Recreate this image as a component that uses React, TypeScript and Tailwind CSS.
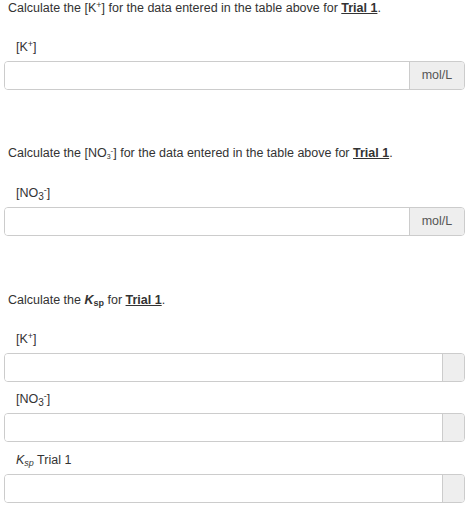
const font = { fontFamily: '"Liberation Sans", Arial, sans-serif' };

const Trial = () => <u className="font-bold">Trial 1</u>;

const Field = ({ label, unit }: { label: React.ReactNode; unit?: string }) => (
  <div>
    <div className="pl-[12px] text-[12.5px] leading-[16px] text-[#333] h-[16px]">{label}</div>
    <div className="mt-[6px] flex h-[29px] rounded-[4px] border border-[#ccc] overflow-hidden shadow-[inset_0_1px_1px_rgba(0,0,0,0.06)]">
      <div className="flex-1 bg-white" />
      <div
        className={
          unit
            ? 'flex w-[55px] items-center justify-center border-l border-[#ccc] bg-[#eee] text-[12.5px] text-[#555]'
            : 'w-[22px] border-l border-[#ccc] bg-[#eee]'
        }
      >
        {unit}
      </div>
    </div>
  </div>
);

const NO3 = () => (
  <span>
    [NO<sub className="text-[10px]">3</sub>
    <sup className="text-[9px]">-</sup>]
  </span>
);

const KPlus = () => (
  <span>
    [K<sup className="text-[9px]">+</sup>]
  </span>
);

export default function App() {
  return (
    <div className="w-[474px] h-[529px] bg-white pl-[4px] pr-[9px] text-[#333]" style={font}>
      <p className="pl-[4px] h-[16px] text-[12.5px] leading-[16px]">
        Calculate the <KPlus /> for the data entered in the table above for <Trial />.
      </p>
      <div className="mt-[23px]">
        <Field label={<KPlus />} unit="mol/L" />
      </div>

      <p className="pl-[4px] h-[16px] mt-[55px] text-[12.5px] leading-[16px]">
        Calculate the [NO<sub className="text-[7px]">3</sub>
        <sup className="text-[8px]">-</sup>] for the data entered in the table above for <Trial />.
      </p>
      <div className="mt-[24px]">
        <Field label={<NO3 />} unit="mol/L" />
      </div>

      <p className="pl-[4px] h-[16px] mt-[56px] text-[12.5px] leading-[16px]">
        Calculate the{' '}
        <b className="italic">
          K<sub className="text-[9px] not-italic">sp</sub>
        </b>{' '}
        for <Trial />.
      </p>
      <div className="mt-[23px]">
        <Field label={<KPlus />} />
      </div>
      <div className="mt-[9px]">
        <Field label={<NO3 />} />
      </div>
      <div className="mt-[10px]">
        <Field
          label={
            <span>
              <i>
                K<sub className="text-[9px]">sp</sub>
              </i>{' '}
              Trial 1
            </span>
          }
        />
      </div>
    </div>
  );
}
